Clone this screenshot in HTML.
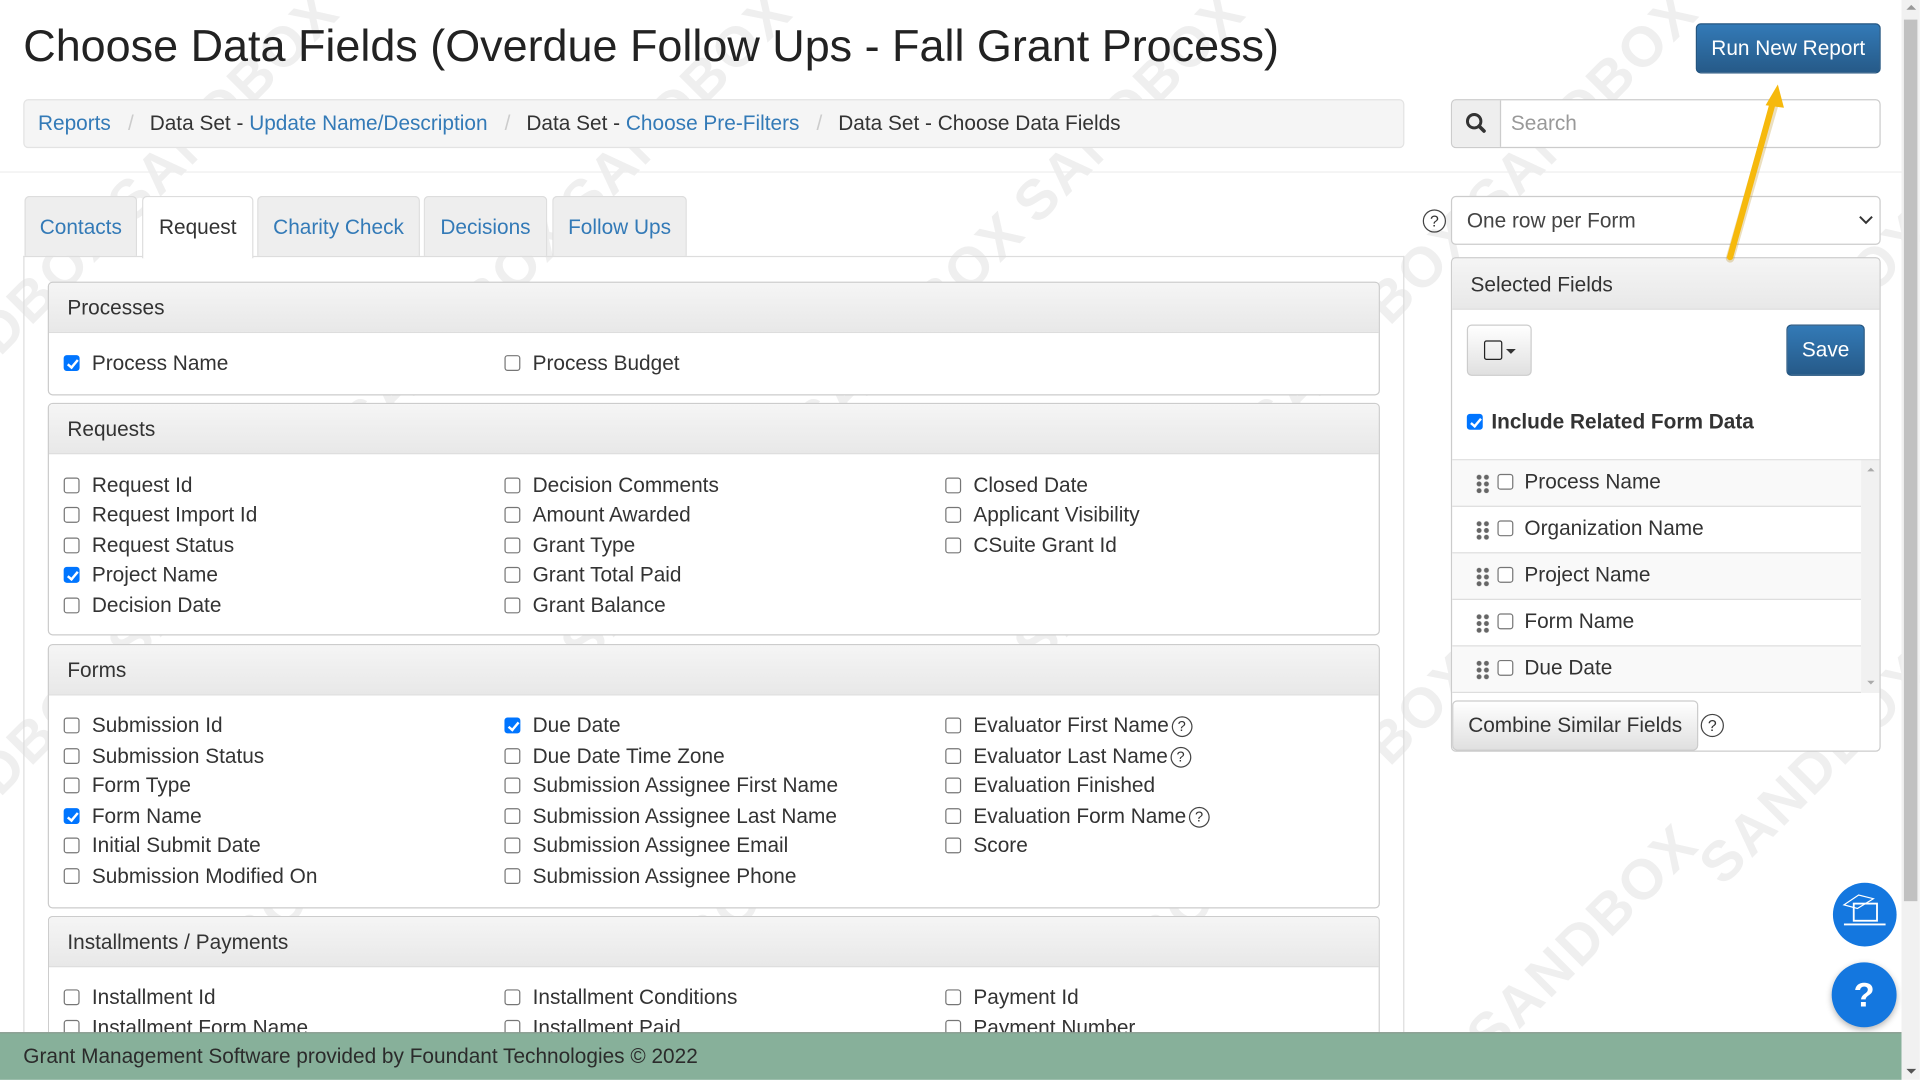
<!DOCTYPE html>
<html><head><meta charset="utf-8">
<style>
html,body{margin:0;padding:0;width:1920px;height:1080px;overflow:hidden;background:#fff;position:relative;}
#w{position:absolute;left:0;top:0;width:1568px;height:882px;transform:scale(1.2244);transform-origin:0 0;font-family:"Liberation Sans",Arial,sans-serif;color:#333;overflow:hidden;background:#fff;}
.a{position:absolute;}
.wm{position:absolute;font:bold 46px "Liberation Sans",sans-serif;color:#efefef;transform:rotate(-45deg);letter-spacing:2px;white-space:nowrap;}
.lnk{color:#337ab7;}
.sep{color:#ccc;padding:0 13px 0 14px}
.tab{position:absolute;top:160px;height:49px;background:#eee;border:1px solid #ddd;border-bottom:none;border-radius:4px 4px 0 0;font-size:17px;line-height:50px;text-align:center;color:#337ab7;box-sizing:border-box;}
.panel{position:absolute;left:39px;width:1088px;border:1px solid #ccc;border-radius:4px;background:#fff;box-sizing:border-box;overflow:hidden;}
.ph{height:40px;background:linear-gradient(#f5f5f5,#e8e8e8);border-bottom:1px solid #ddd;font-size:17px;line-height:42px;padding-left:15px;color:#333;}
.i{position:absolute;height:20px;line-height:22px;font-size:17px;color:#333;white-space:nowrap;padding-left:23px;}
.cb{position:absolute;left:0;top:4px;width:11px;height:11px;border:1.3px solid #767676;border-radius:2.5px;background:#fff;}
.cb.on{background:#0075ff;border-color:#0075ff;}
.cb.on:after{content:"";position:absolute;left:3.5px;top:0.5px;width:3px;height:7px;border:solid #fff;border-width:0 2px 2px 0;transform:rotate(40deg);}
.q{display:inline-block;width:15px;height:15px;border:1.3px solid #444;border-radius:50%;font-size:12px;line-height:15px;text-align:center;vertical-align:1px;margin-left:2px;color:#333;}
.btnp{position:absolute;background:linear-gradient(#337ab7,#265a88);border:1px solid #245580;border-radius:4px;color:#fff;font-size:17px;text-align:center;box-sizing:border-box;}
.row{position:absolute;left:0;width:334px;height:38px;border-bottom:1px solid #ddd;box-sizing:border-box;font-size:17px;line-height:36px;}
.grip{position:absolute;left:19px;top:11px;width:12px;height:16px;background:radial-gradient(circle,#666 1.8px,transparent 2.2px) 0 0/6px 5.5px;}
.row .cb{left:37px;top:11px;}
.row span.t{position:absolute;left:59px;}
</style></head><body><div id="w">

<div class="wm" style="left:60px;top:60px">SANDBOX</div>
<div class="wm" style="left:430px;top:60px">SANDBOX</div>
<div class="wm" style="left:800px;top:60px">SANDBOX</div>
<div class="wm" style="left:1170px;top:60px">SANDBOX</div>
<div class="wm" style="left:-120px;top:240px">SANDBOX</div>
<div class="wm" style="left:250px;top:240px">SANDBOX</div>
<div class="wm" style="left:620px;top:240px">SANDBOX</div>
<div class="wm" style="left:990px;top:240px">SANDBOX</div>
<div class="wm" style="left:1360px;top:240px">SANDBOX</div>
<div class="wm" style="left:60px;top:420px">SANDBOX</div>
<div class="wm" style="left:430px;top:420px">SANDBOX</div>
<div class="wm" style="left:800px;top:420px">SANDBOX</div>
<div class="wm" style="left:1170px;top:420px">SANDBOX</div>
<div class="wm" style="left:-120px;top:600px">SANDBOX</div>
<div class="wm" style="left:250px;top:600px">SANDBOX</div>
<div class="wm" style="left:620px;top:600px">SANDBOX</div>
<div class="wm" style="left:990px;top:600px">SANDBOX</div>
<div class="wm" style="left:1360px;top:600px">SANDBOX</div>
<div class="wm" style="left:60px;top:760px">SANDBOX</div>
<div class="wm" style="left:430px;top:760px">SANDBOX</div>
<div class="wm" style="left:800px;top:760px">SANDBOX</div>
<div class="wm" style="left:1170px;top:740px">SANDBOX</div>

<div class="a" style="left:19px;top:17px;font-size:36.7px;color:#222;white-space:nowrap">Choose Data Fields (Overdue Follow Ups - Fall Grant Process)</div>
<div class="btnp" style="left:1385px;top:19px;width:151px;height:41px;line-height:39px">Run New Report</div>

<div class="a" style="left:19px;top:81px;width:1128px;height:40px;background:#f5f5f5;border:1px solid #e3e3e3;border-radius:4px;box-sizing:border-box;font-size:17px;line-height:38px;padding-left:11px;white-space:nowrap">
<span class="lnk">Reports</span><span class="sep">/</span>Data Set - <span class="lnk">Update Name/Description</span><span class="sep">/</span>Data Set - <span class="lnk">Choose Pre-Filters</span><span class="sep">/</span>Data Set - Choose Data Fields</div>

<div class="a" style="left:1185px;top:81px;width:351px;height:40px;border:1px solid #ccc;border-radius:4px;box-sizing:border-box;background:#fff;overflow:hidden">
 <div class="a" style="left:0;top:0;width:39px;height:38px;background:#eee;border-right:1px solid #ccc">
  <svg width="39" height="38"><circle cx="18" cy="17" r="5.5" fill="none" stroke="#333" stroke-width="2.4"/><line x1="22" y1="21" x2="26" y2="25" stroke="#333" stroke-width="3" stroke-linecap="round"/></svg></div>
 <div class="a" style="left:48px;top:0;line-height:38px;font-size:17px;color:#999">Search</div>
</div>
<div class="a" style="left:0;top:140px;width:1553px;height:1px;background:#eee"></div>

<div class="tab" style="left:20px;width:92px">Contacts</div>
<div class="tab" style="left:116px;width:91px;height:51px;background:#fff;color:#333;z-index:2">Request</div>
<div class="tab" style="left:210px;width:133px">Charity Check</div>
<div class="tab" style="left:346px;width:101px">Decisions</div>
<div class="tab" style="left:451px;width:110px">Follow Ups</div>
<div class="a" style="left:19px;top:209px;width:1128px;height:634px;border:1px solid #ddd;border-bottom:none;box-sizing:border-box"></div>

<div class="panel" style="top:230px;height:93px"><div class="ph">Processes</div></div>
<div class="i" style="left:52px;top:286px"><span class="cb on"></span>Process Name</div>
<div class="i" style="left:412px;top:286px"><span class="cb"></span>Process Budget</div>

<div class="panel" style="top:329px;height:190px"><div class="ph">Requests</div></div>
<div class="i" style="left:52px;top:386px"><span class="cb"></span>Request Id</div>
<div class="i" style="left:52px;top:410px"><span class="cb"></span>Request Import Id</div>
<div class="i" style="left:52px;top:435px"><span class="cb"></span>Request Status</div>
<div class="i" style="left:52px;top:459px"><span class="cb on"></span>Project Name</div>
<div class="i" style="left:52px;top:484px"><span class="cb"></span>Decision Date</div>
<div class="i" style="left:412px;top:386px"><span class="cb"></span>Decision Comments</div>
<div class="i" style="left:412px;top:410px"><span class="cb"></span>Amount Awarded</div>
<div class="i" style="left:412px;top:435px"><span class="cb"></span>Grant Type</div>
<div class="i" style="left:412px;top:459px"><span class="cb"></span>Grant Total Paid</div>
<div class="i" style="left:412px;top:484px"><span class="cb"></span>Grant Balance</div>
<div class="i" style="left:772px;top:386px"><span class="cb"></span>Closed Date</div>
<div class="i" style="left:772px;top:410px"><span class="cb"></span>Applicant Visibility</div>
<div class="i" style="left:772px;top:435px"><span class="cb"></span>CSuite Grant Id</div>

<div class="panel" style="top:526px;height:216px"><div class="ph">Forms</div></div>
<div class="i" style="left:52px;top:582px"><span class="cb"></span>Submission Id</div>
<div class="i" style="left:52px;top:607px"><span class="cb"></span>Submission Status</div>
<div class="i" style="left:52px;top:631px"><span class="cb"></span>Form Type</div>
<div class="i" style="left:52px;top:656px"><span class="cb on"></span>Form Name</div>
<div class="i" style="left:52px;top:680px"><span class="cb"></span>Initial Submit Date</div>
<div class="i" style="left:52px;top:705px"><span class="cb"></span>Submission Modified On</div>
<div class="i" style="left:412px;top:582px"><span class="cb on"></span>Due Date</div>
<div class="i" style="left:412px;top:607px"><span class="cb"></span>Due Date Time Zone</div>
<div class="i" style="left:412px;top:631px"><span class="cb"></span>Submission Assignee First Name</div>
<div class="i" style="left:412px;top:656px"><span class="cb"></span>Submission Assignee Last Name</div>
<div class="i" style="left:412px;top:680px"><span class="cb"></span>Submission Assignee Email</div>
<div class="i" style="left:412px;top:705px"><span class="cb"></span>Submission Assignee Phone</div>
<div class="i" style="left:772px;top:582px"><span class="cb"></span>Evaluator First Name<span class="q">?</span></div>
<div class="i" style="left:772px;top:607px"><span class="cb"></span>Evaluator Last Name<span class="q">?</span></div>
<div class="i" style="left:772px;top:631px"><span class="cb"></span>Evaluation Finished</div>
<div class="i" style="left:772px;top:656px"><span class="cb"></span>Evaluation Form Name<span class="q">?</span></div>
<div class="i" style="left:772px;top:680px"><span class="cb"></span>Score</div>

<div class="panel" style="top:748px;height:95px;border-bottom:none;border-radius:4px 4px 0 0"><div class="ph">Installments / Payments</div></div>
<div class="i" style="left:52px;top:804px"><span class="cb"></span>Installment Id</div>
<div class="i" style="left:52px;top:829px"><span class="cb"></span>Installment Form Name</div>
<div class="i" style="left:412px;top:804px"><span class="cb"></span>Installment Conditions</div>
<div class="i" style="left:412px;top:829px"><span class="cb"></span>Installment Paid</div>
<div class="i" style="left:772px;top:804px"><span class="cb"></span>Payment Id</div>
<div class="i" style="left:772px;top:829px"><span class="cb"></span>Payment Number</div>

<div class="a" style="left:1162px;top:171px;width:17px;height:17px;border:1.3px solid #444;border-radius:50%;font-size:13px;line-height:17px;text-align:center;color:#333">?</div>
<div class="a" style="left:1185px;top:160px;width:351px;height:40px;border:1px solid #ccc;border-radius:4px;box-sizing:border-box;background:#fff;font-size:17px;line-height:40px;padding-left:12px;color:#444">One row per Form
 <svg class="a" style="right:4px;top:13px" width="14" height="12"><polyline points="2,3 7,8 12,3" fill="none" stroke="#333" stroke-width="1.6"/></svg></div>

<div class="a" style="left:1185px;top:210px;width:351px;height:404px;border:1px solid #ccc;border-radius:4px;box-sizing:border-box;background:#fff;overflow:hidden">
 <div style="height:41px;background:linear-gradient(#f5f5f5,#e8e8e8);border-bottom:1px solid #ddd;font-size:17px;line-height:43px;padding-left:15px">Selected Fields</div>
 <div class="a" style="left:12px;top:54px;width:53px;height:42px;border:1px solid #ccc;border-radius:4px;box-sizing:border-box;background:linear-gradient(#fff,#e0e0e0)">
  <div class="a" style="left:13px;top:12px;width:13px;height:14px;border:1.5px solid #222;border-radius:2px"></div>
  <div class="a" style="left:31px;top:19px;width:0;height:0;border-left:4px solid transparent;border-right:4px solid transparent;border-top:4px solid #333"></div></div>
 <div class="btnp" style="left:273px;top:54px;width:64px;height:42px;line-height:40px">Save</div>
 <div class="i" style="left:12px;top:123px;font-weight:bold;padding-left:20px"><span class="cb on"></span>Include Related Form Data</div>
 <div class="a" style="left:0;top:164px;width:350px;height:190px;border-top:1px solid #ddd">
  <div class="row" style="top:0;background:#f9f9f9"><span class="grip"></span><span class="cb"></span><span class="t">Process Name</span></div>
  <div class="row" style="top:38px"><span class="grip"></span><span class="cb"></span><span class="t">Organization Name</span></div>
  <div class="row" style="top:76px;background:#f9f9f9"><span class="grip"></span><span class="cb"></span><span class="t">Project Name</span></div>
  <div class="row" style="top:114px"><span class="grip"></span><span class="cb"></span><span class="t">Form Name</span></div>
  <div class="row" style="top:152px;background:#f9f9f9"><span class="grip"></span><span class="cb"></span><span class="t">Due Date</span></div>
  <div class="a" style="left:334px;top:0;width:16px;height:190px;background:#f1f1f1"></div>
  <div class="a" style="left:339px;top:6px;border-left:3px solid transparent;border-right:3px solid transparent;border-bottom:3px solid #aaa"></div>
  <div class="a" style="left:339px;top:180px;border-left:3px solid transparent;border-right:3px solid transparent;border-top:3px solid #aaa"></div>
 </div>
 <div class="a" style="left:0;top:361px;width:201px;height:41px;border:1px solid #ccc;border-radius:4px;box-sizing:border-box;background:linear-gradient(#fff,#e0e0e0);font-size:17px;line-height:39px;text-align:center">Combine Similar Fields</div>
 <div class="a" style="left:203px;top:372px;width:17px;height:17px;border:1.3px solid #444;border-radius:50%;font-size:13px;line-height:17px;text-align:center">?</div>
</div>

<svg class="a" style="left:1390px;top:60px" width="80" height="170">
 <line x1="23" y1="151" x2="60" y2="22" stroke="#b08000" stroke-width="7" stroke-linecap="round" opacity="0.25"/>
 <line x1="23" y1="150" x2="59" y2="20" stroke="#f6b90c" stroke-width="5" stroke-linecap="round"/>
 <polygon points="62,9 52,26 67,28" fill="#f6b90c"/>
</svg>

<div class="a" style="left:1497px;top:721px;width:52px;height:52px;border-radius:50%;background:#1477df">
 <svg width="52" height="52"><rect x="17" y="17" width="19" height="14" fill="none" stroke="#fff" stroke-width="1.5"/><line x1="9" y1="34" x2="43" y2="34" stroke="#fff" stroke-width="1.5"/><polygon points="9,18 21,10 33,13 20,21" fill="none" stroke="#fff" stroke-width="1"/></svg></div>
<div class="a" style="left:1496px;top:786px;width:53px;height:53px;border-radius:50%;background:#1477df;box-shadow:0 2px 5px rgba(0,0,0,0.3);color:#fff;font:bold 28px 'Liberation Sans',sans-serif;text-align:center;line-height:53px">?</div>

<div class="a" style="left:0;top:843px;width:1553px;height:39px;background:#87b09a;border-top:1px solid #8a9a90;font-size:17px;line-height:38px;padding-left:19px;color:#2b2b2b;box-sizing:border-box">Grant Management Software provided by Foundant Technologies © 2022</div>

<div class="a" style="left:1553px;top:0;width:15px;height:882px;background:#f1f1f1"></div>
<div class="a" style="left:1555px;top:16px;width:11px;height:720px;background:#c1c1c1"></div>
<div class="a" style="left:1557px;top:4px;border-left:4px solid transparent;border-right:4px solid transparent;border-bottom:4px solid #999"></div>
<div class="a" style="left:1557px;top:873px;border-left:4px solid transparent;border-right:4px solid transparent;border-top:4px solid #555"></div>

</div></body></html>
